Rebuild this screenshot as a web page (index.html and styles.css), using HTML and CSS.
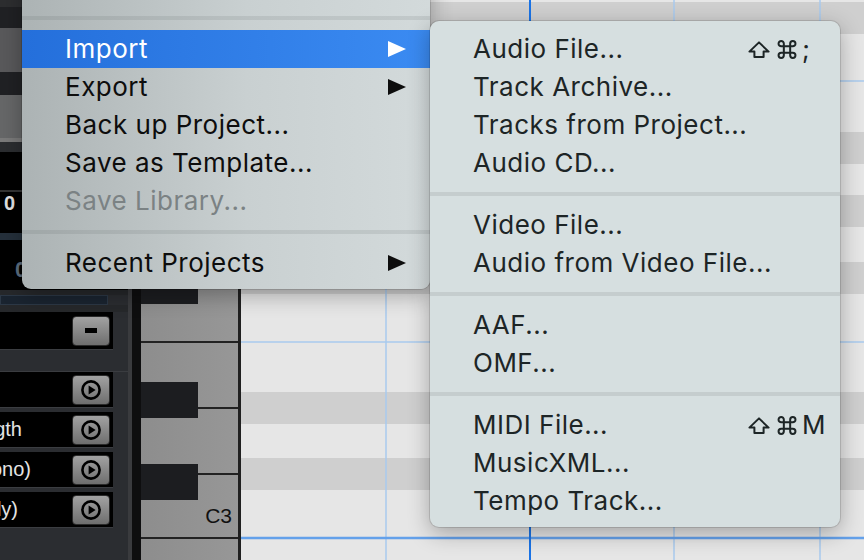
FILE: index.html
```html
<!DOCTYPE html>
<html lang="en">
<head>
    <meta charset="UTF-8">
    <meta name="viewport" content="width=device-width, initial-scale=1.0">
    <title>Key Editor - File menu</title>
    <link rel="stylesheet" href="styles.css">
</head>
<body>

<div class="app">
    <div class="inspector">
        <div class="strip s-top"></div>
        <div class="strip s-dark"></div>
        <div class="strip s-track"></div>
        <div class="strip s-dark s-dark-2"></div>
        <div class="strip s-track s-track-sel"></div>
        <div class="strip s-gap"></div>
        <div class="field field-empty"></div>
        <div class="field field-value">0</div>
        <div class="strip s-meter"></div>
        <div class="field field-tall"><span class="dim-value">0</span></div>
        <div class="strip s-gap-small"></div>
        <div class="meter-bar"></div>
        <div class="strip s-gap-small s-gap-7"></div>
        <div class="param-row param-single">
            <span class="param-label"></span>
            <button class="param-btn"><span class="dash"></span></button>
        </div>
        <div class="section-gap"></div>
        <div class="param-list">
            <div class="param-row">
                <span class="param-label"><span>Legato</span></span>
                <button class="param-btn">
                    <svg width="22" height="22" viewBox="0 0 22 22"><circle cx="11" cy="11" r="8.6" fill="none" stroke="#000" stroke-width="2.6"/><path d="M8.6 6.4 L15.6 11 L8.6 15.6 Z" fill="#000"/></svg>
                </button>
            </div>
            <div class="param-row">
                <span class="param-label lbl-length"><span>Fixed Length</span></span>
                <button class="param-btn">
                    <svg width="22" height="22" viewBox="0 0 22 22"><circle cx="11" cy="11" r="8.6" fill="none" stroke="#000" stroke-width="2.6"/><path d="M8.6 6.4 L15.6 11 L8.6 15.6 Z" fill="#000"/></svg>
                </button>
            </div>
            <div class="param-row">
                <span class="param-label lbl-mono"><span>Delete Overlaps (Mono)</span></span>
                <button class="param-btn">
                    <svg width="22" height="22" viewBox="0 0 22 22"><circle cx="11" cy="11" r="8.6" fill="none" stroke="#000" stroke-width="2.6"/><path d="M8.6 6.4 L15.6 11 L8.6 15.6 Z" fill="#000"/></svg>
                </button>
            </div>
            <div class="param-row">
                <span class="param-label lbl-poly"><span>Delete Overlaps (Poly)</span></span>
                <button class="param-btn">
                    <svg width="22" height="22" viewBox="0 0 22 22"><circle cx="11" cy="11" r="8.6" fill="none" stroke="#000" stroke-width="2.6"/><path d="M8.6 6.4 L15.6 11 L8.6 15.6 Z" fill="#000"/></svg>
                </button>
            </div>
        </div>
    </div>

    <div class="zone-divider"></div>

    <div class="keyboard">
        <svg width="97" height="560" viewBox="0 0 97 560">
            <defs>
                <linearGradient id="whiteKey" x1="0" x2="1" y1="0" y2="0">
                    <stop offset="0" stop-color="#8d8d8d"/>
                    <stop offset="1" stop-color="#979797"/>
                </linearGradient>
            </defs>
            <rect width="97" height="560" fill="url(#whiteKey)"/>
            <g stroke="#222" stroke-width="2">
                <line x1="0" y1="12" x2="97" y2="12"/>
                <line x1="0" y1="78" x2="97" y2="78"/>
                <line x1="0" y1="144" x2="97" y2="144"/>
                <line x1="0" y1="210" x2="97" y2="210"/>
                <line x1="0" y1="276" x2="97" y2="276"/>
                <line x1="0" y1="342" x2="97" y2="342"/>
                <line x1="0" y1="408" x2="97" y2="408"/>
                <line x1="0" y1="474" x2="97" y2="474"/>
                <line x1="0" y1="538" x2="97" y2="538"/>
            </g>
            <g fill="#1c1d20">
                <rect x="0" y="50" width="57" height="36"/>
                <rect x="0" y="130" width="57" height="36"/>
                <rect x="0" y="200" width="57" height="36"/>
                <rect x="0" y="268" width="57" height="36"/>
                <rect x="0" y="382" width="57" height="36"/>
                <rect x="0" y="464" width="57" height="36"/>
            </g>
            <text x="91" y="523" text-anchor="end" class="key-label">C3</text>
        </svg>
    </div>
    <div class="keyboard-edge"></div>

    <div class="grid">
        <svg width="623" height="560" viewBox="0 0 623 560">
            <rect width="623" height="560" fill="#e6e6e6"/>
            <g fill="#cfcfcf">
                <rect y="2" width="623" height="32"/>
                <rect y="132" width="623" height="32"/>
                <rect y="195" width="623" height="32"/>
                <rect y="262" width="623" height="32"/>
                <rect y="392" width="623" height="32"/>
                <rect y="458" width="623" height="32"/>
            </g>
            <g stroke="#a9caee" stroke-width="1.5">
                <line x1="0" y1="81" x2="623" y2="81"/>
                <line x1="0" y1="342" x2="623" y2="342"/>
                <line x1="145" y1="0" x2="145" y2="560"/>
                <line x1="433" y1="0" x2="433" y2="560"/>
                <line x1="579" y1="0" x2="579" y2="560"/>
            </g>
            <line x1="0" y1="538" x2="623" y2="538" stroke="#64a1ea" stroke-width="2.5"/>
            <line x1="289" y1="0" x2="289" y2="560" stroke="#1a73e6" stroke-width="2"/>
        </svg>
    </div>

    <div class="menu file-menu">
        <div class="menu-item">Revert</div>
        <div class="menu-sep"></div>
        <div class="menu-item active">Import <span class="arrow"></span></div>
        <div class="menu-item">Export <span class="arrow"></span></div>
        <div class="menu-item">Back up Project...</div>
        <div class="menu-item">Save as Template...</div>
        <div class="menu-item disabled">Save Library...</div>
        <div class="menu-sep"></div>
        <div class="menu-item">Recent Projects <span class="arrow"></span></div>
    </div>

    <div class="menu submenu">
        <div class="menu-item">Audio File...
            <span class="shortcut">
                <span class="mods">
                    <svg class="mod-shift" width="22" height="17" viewBox="0 0 22 17"><path d="M11 1.4 L20.6 10.6 H15.6 V16 H6.4 V10.6 H1.4 Z" fill="none" stroke="currentColor" stroke-width="2" stroke-linejoin="round"/></svg>
                    <svg class="mod-cmd" width="20" height="19" viewBox="1 1 18 18"><path d="M7 7 V4.5 A2.5 2.5 0 1 0 4.5 7 H15.5 A2.5 2.5 0 1 0 13 4.5 V15.5 A2.5 2.5 0 1 0 15.5 13 H4.5 A2.5 2.5 0 1 0 7 15.5 Z" fill="none" stroke="currentColor" stroke-width="1.9"/></svg>
                </span>;</span>
        </div>
        <div class="menu-item">Track Archive...</div>
        <div class="menu-item">Tracks from Project...</div>
        <div class="menu-item">Audio CD...</div>
        <div class="menu-sep"></div>
        <div class="menu-item">Video File...</div>
        <div class="menu-item">Audio from Video File...</div>
        <div class="menu-sep"></div>
        <div class="menu-item">AAF...</div>
        <div class="menu-item">OMF...</div>
        <div class="menu-sep"></div>
        <div class="menu-item">MIDI File...
            <span class="shortcut">
                <span class="mods">
                    <svg class="mod-shift" width="22" height="17" viewBox="0 0 22 17"><path d="M11 1.4 L20.6 10.6 H15.6 V16 H6.4 V10.6 H1.4 Z" fill="none" stroke="currentColor" stroke-width="2" stroke-linejoin="round"/></svg>
                    <svg class="mod-cmd" width="20" height="19" viewBox="1 1 18 18"><path d="M7 7 V4.5 A2.5 2.5 0 1 0 4.5 7 H15.5 A2.5 2.5 0 1 0 13 4.5 V15.5 A2.5 2.5 0 1 0 15.5 13 H4.5 A2.5 2.5 0 1 0 7 15.5 Z" fill="none" stroke="currentColor" stroke-width="1.9"/></svg>
                </span>M</span>
        </div>
        <div class="menu-item">MusicXML...</div>
        <div class="menu-item">Tempo Track...</div>
    </div>
</div>

</body>
</html>
```

FILE: styles.css
```css
body {
    margin: 0;
    background: #2b2d31;
    font-family: Inter, "Liberation Sans", sans-serif;
}
.app {
    position: relative;
    display: flex;
    width: 864px;
    height: 560px;
    overflow: hidden;
}

/* left inspector */
.inspector {
    width: 128px;
    flex-shrink: 0;
    display: flex;
    flex-direction: column;
    background: #2b2d31;
}
.strip {
    flex-shrink: 0;
}
.s-top {
    height: 7px;
    background: #2d2e30;
}
.s-dark {
    height: 21px;
    background: #202124;
}
.s-dark-2 {
    height: 23px;
}
.s-track {
    height: 44px;
    background: #59595b;
}
.s-track-sel {
    height: 43px;
    background: #666768;
    border-bottom: 4px solid #7a7a7a;
}
.s-gap {
    height: 10px;
    background: #2b2d30;
}
.field {
    flex-shrink: 0;
    background: #000;
    color: #e2e2e2;
}
.field-empty {
    height: 38px;
    border-bottom: 2px solid #333;
}
.field-value {
    height: 41px;
    line-height: 41px;
    padding-left: 4px;
    font: bold 20px "Liberation Sans", sans-serif;
}
.s-meter {
    height: 7px;
    background: #25303b;
}
.field-tall {
    height: 50px;
    padding-top: 10px;
    box-sizing: border-box;
}
.dim-value {
    display: block;
    padding-left: 15px;
    font: bold 22px/40px "Liberation Sans", sans-serif;
    color: #5e6f80;
}
.s-gap-small {
    height: 5px;
    background: #26282b;
}
.s-gap-7 {
    height: 7px;
}
.meter-bar {
    flex-shrink: 0;
    width: 106px;
    height: 8px;
    background: #1a2430;
    border: 1px solid #2c3846;
}
.param-row {
    display: flex;
    align-items: center;
    justify-content: space-between;
    width: 113px;
    height: 36px;
    padding-right: 3px;
    box-sizing: border-box;
    background: #000;
    border-bottom: 1px solid #3b3d41;
}
.param-single {
    height: 38px;
}
.section-gap {
    flex-shrink: 0;
    height: 22px;
    border-bottom: 1px solid #3a3c40;
    box-sizing: border-box;
}
.param-list {
    display: flex;
    flex-direction: column;
    gap: 4px;
}
.param-label {
    display: flex;
    justify-content: flex-end;
    width: 0;
    overflow: hidden;
    white-space: nowrap;
    color: #e4e4e4;
    font: 20px "Liberation Sans", sans-serif;
}
.lbl-length {
    width: 22px;
}
.lbl-mono {
    width: 31px;
}
.lbl-poly {
    width: 18px;
}
.param-btn {
    display: flex;
    align-items: center;
    justify-content: center;
    width: 38px;
    height: 30px;
    padding: 0;
    border: 1px solid #2a2a2a;
    border-radius: 4px;
    background: linear-gradient(#a2a2a2, #6e6e6e);
}
.dash {
    width: 12px;
    height: 5px;
    background: #000;
}

.zone-divider {
    width: 4px;
    flex-shrink: 0;
    background: #3a3b3e;
    border-right: 9px solid #0e0e0f;
}
.keyboard {
    width: 97px;
    flex-shrink: 0;
}
.keyboard svg,
.grid svg {
    display: block;
}
.key-label {
    font: 21px "Liberation Sans", sans-serif;
    fill: #111;
}
.keyboard-edge {
    width: 3px;
    flex-shrink: 0;
    background: #202020;
}
.grid {
    flex: 1;
}

/* menus */
.menu {
    position: absolute;
    box-sizing: border-box;
    padding: 7px 0;
    border-radius: 9px;
    font-size: 26px;
    letter-spacing: 0.5px;
    box-shadow: 0 0 0 1px rgba(0, 0, 0, 0.12), 0 6px 22px rgba(0, 0, 0, 0.3);
}
.file-menu {
    left: 22px;
    top: -39px;
    width: 408px;
    color: #0d0d0d;
    background: linear-gradient(to right, #acb3b4 0%, #b9c0c1 25%, #c9d0d1 55%, #d3dadb 100%);
}
.submenu {
    left: 430px;
    top: 21px;
    width: 410px;
    padding-top: 9px;
    color: #1d2526;
    background: #d6dfe0;
}
.menu-item {
    display: flex;
    align-items: center;
    justify-content: space-between;
    height: 38px;
    line-height: 38px;
    padding: 0 24px 0 43px;
    white-space: nowrap;
}
.submenu .menu-item {
    padding-right: 14px;
}
.menu-item.active {
    color: #fff;
    background: linear-gradient(to right, #246fdb, #3b8bf2);
}
.menu-item.disabled {
    color: #7b8284;
}
.menu-sep {
    height: 4px;
    margin: 10px 0;
    background: rgba(70, 80, 82, 0.12);
}
.arrow {
    width: 0;
    height: 0;
    border-left: 18px solid currentColor;
    border-top: 8px solid transparent;
    border-bottom: 8px solid transparent;
}
.shortcut {
    display: flex;
    align-items: center;
    width: 78px;
    letter-spacing: 0;
}
.mods {
    display: flex;
    align-items: center;
    gap: 7px;
    width: 54px;
}
.mod-cmd {
    margin-top: 1px;
}
```
